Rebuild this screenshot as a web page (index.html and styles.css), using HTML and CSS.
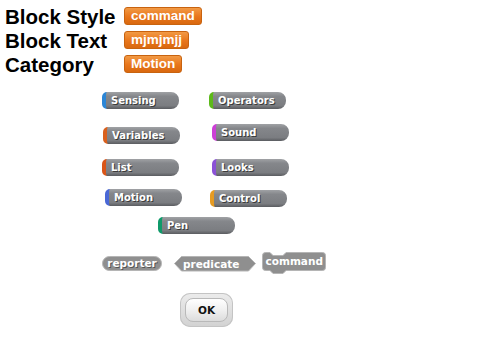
FILE: index.html
```html
<!DOCTYPE html>
<html lang="en">
<head>
  <meta charset="UTF-8" />
  <title>Block Style</title>
  <link rel="stylesheet" href="styles.css">
</head>
<body>
  <div class="settings">
    <div class="setting">
      <span class="label">Block Style</span>
      <span class="badge">command</span>
    </div>
    <div class="setting">
      <span class="label">Block Text</span>
      <span class="badge">mjmjmjj</span>
    </div>
    <div class="setting">
      <span class="label">Category</span>
      <span class="badge">Motion</span>
    </div>
  </div>

  <div class="palette">
    <div class="row row-1">
      <div class="block sensing">Sensing</div>
      <div class="block operators">Operators</div>
    </div>
    <div class="row row-2">
      <div class="block variables">Variables</div>
      <div class="block sound">Sound</div>
    </div>
    <div class="row row-3">
      <div class="block list">List</div>
      <div class="block looks">Looks</div>
    </div>
    <div class="row row-4">
      <div class="block motion">Motion</div>
      <div class="block control">Control</div>
    </div>
    <div class="row row-5">
      <div class="block pen">Pen</div>
    </div>

    <!-- block shapes -->
    <div class="shapes">
      <div class="reporter">reporter</div>
      <svg class="predicate" width="82" height="16" viewBox="0 0 82 16">
        <polygon points="0.5,7.5 7.5,0.5 74.5,0.5 81.5,7.5 74.5,15 7.5,15" fill="#8f8f8f" stroke="#b5b5b5"/>
        <text x="9" y="11.5" class="shape-text">predicate</text>
      </svg>
      <svg class="command" width="65" height="23" viewBox="0 0 65 23">
        <path d="M0.5,3.5 Q0.5,0.5 3.5,0.5 H8 L11,3.5 H21 L24,0.5 H60.5 Q63.5,0.5 63.5,3.5 V15.5 Q63.5,18.5 60.5,18.5 H24 L21,21.5 H11 L8,18.5 H3.5 Q0.5,18.5 0.5,15.5 Z" fill="#8f8f8f" stroke="#b5b5b5"/>
        <text x="3.5" y="12.5" class="shape-text">command</text>
      </svg>
    </div>

    <div class="ok-frame">
      <button class="ok-btn">OK</button>
    </div>
  </div>
</body>
</html>
```

FILE: styles.css
```css
body {
  margin: 0;
  background-color: white;
  font-family: 'Liberation Sans', Arial, sans-serif;
}

.settings {
  padding: 5px 0 0 5px;
}

.setting {
  display: flex;
  align-items: flex-start;
  height: 24px;
}

.label {
  width: 119px;
  font-size: 20.5px;
  font-weight: bold;
  line-height: 24px;
  color: #000;
}

.badge {
  margin-top: 2px;
  height: 16px;
  padding: 0 6px;
  border: 1px solid #c8630f;
  border-radius: 3px;
  background: linear-gradient(#f29a45, #e8761b 55%, #d9680f);
  color: white;
  font-size: 13.5px;
  font-weight: bold;
  line-height: 16px;
}

.palette {
  padding-left: 102px;
  margin-top: 15px;
}

.row {
  display: flex;
  gap: 30px;
  height: 17px;
}

.row-2 { margin-top: 18px; }
.row-3 { margin-top: 15px; }
.row-4 { margin-top: 13px; }
.row-5 { margin-top: 11px; }

.block {
  box-sizing: border-box;
  width: 77px;
  height: 17px;
  padding-left: 5px;
  border-left: 4px solid #888;
  border-radius: 5px 8px 8px 5px;
  background: linear-gradient(#a0a2a5, #85878b 25%, #7b7d81 80%, #5a5c60);
  color: white;
  font-family: 'DejaVu Sans', sans-serif;
  font-size: 10px;
  font-weight: bold;
  line-height: 17px;
  text-shadow: 1px 1px 0 #3a3a3a;
}

.sensing { border-left-color: #2b86d6; }
.operators { border-left-color: #5cb91a; }
.variables { border-left-color: #d9601d; margin-left: 1px; }
.sound { border-left-color: #cc3fd6; margin-left: 2px; margin-top: -3px; }
.list { border-left-color: #d95518; }
.looks { border-left-color: #8b52d6; margin-left: 3px; }
.motion { border-left-color: #4a68d6; margin-left: 3px; }
.control { border-left-color: #e69b22; margin-left: -2px; margin-top: 1px; }
.pen { border-left-color: #0f9a6a; margin-left: 56px; }

.shapes {
  display: flex;
  align-items: flex-start;
  margin-top: 18px;
  height: 23px;
}

.reporter {
  box-sizing: border-box;
  margin-top: 4px;
  width: 60px;
  height: 15px;
  border: 1px solid #b5b5b5;
  border-radius: 8px;
  background: #8f8f8f;
  color: white;
  font-family: 'DejaVu Sans', sans-serif;
  font-size: 10.5px;
  font-weight: bold;
  line-height: 13px;
  text-align: center;
  text-shadow: 1px 1px 0 #555;
}

.predicate {
  margin: 4px 0 0 12px;
}

.command {
  margin-left: 6px;
}

.shape-text {
  fill: white;
  font-family: 'DejaVu Sans', sans-serif;
  font-size: 10.5px;
  font-weight: bold;
}

.ok-frame {
  box-sizing: border-box;
  margin: 18px 0 0 78px;
  width: 53px;
  height: 34px;
  padding: 5px;
  border-radius: 10px;
  background: linear-gradient(#ececec, #d2d2d2);
  box-shadow: inset 0 0 0 1px #c4c4c4;
}

.ok-btn {
  display: block;
  width: 100%;
  height: 100%;
  border: 1px solid #b9b9b9;
  border-radius: 8px;
  background: linear-gradient(#ffffff, #f0f0f0 50%, #dcdcdc);
  color: #111;
  font-family: 'DejaVu Sans', sans-serif;
  font-size: 10.5px;
  font-weight: bold;
  padding: 0;
}
```
